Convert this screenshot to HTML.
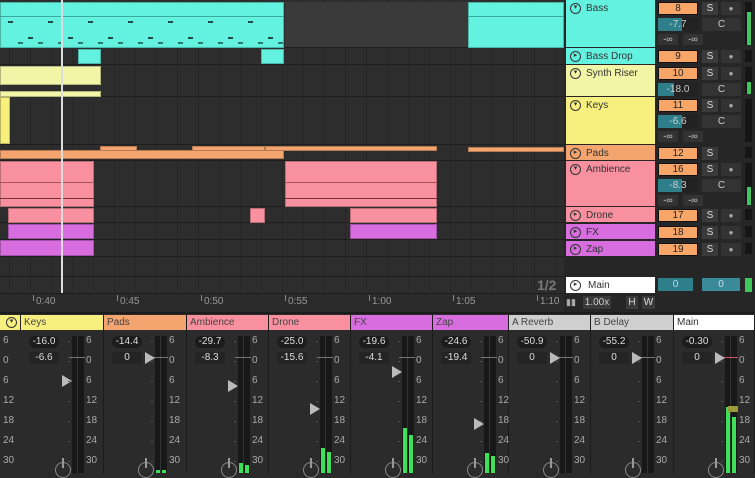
<!DOCTYPE html>
<html><head><meta charset="utf-8"><style>
*{margin:0;padding:0;box-sizing:border-box}
body{width:755px;height:473px;overflow:hidden;background:#2a2a2a;font-family:"Liberation Sans",sans-serif;position:relative;font-size:10px}
.a{position:absolute}
.lbl{font-size:10px;color:#1a1a1a}
.bx{position:absolute;font-size:10px;text-align:center;color:#ddd;line-height:12px}
.ic{position:absolute;width:11px;height:11px;border:1.3px solid #222;border-radius:50%}
</style></head><body>
<!-- arrangement bg -->
<div class="a" style="left:0;top:0;width:564px;height:293px;background:#2d2d2d"></div>
<div id="arr"></div>
<!-- ruler -->
<div class="a" style="left:0;top:293px;width:564px;height:19px;background:#2a2a2a;border-top:1px solid #1e1e1e"></div>
<div id="rul"></div>
<div class="a" style="left:537px;top:277px;font-size:14px;color:#777;font-weight:bold">1/2</div>
<div class="a" style="left:61px;top:0;width:2px;height:293px;background:#ddd"></div>
<!-- right panel -->
<div class="a" style="left:564px;top:0;width:191px;height:312px;background:#262626"></div>
<div id="rp"></div>
<!-- mixer -->
<div class="a" style="left:0;top:312px;width:755px;height:161px;background:#2b2b2b;border-top:2px solid #1c1c1c"></div>
<div id="mx"></div>
<script>
function d(p,s,h){var e=document.createElement('div');e.className='a';e.style.cssText=s;if(h!=null)e.innerHTML=h;document.getElementById(p).appendChild(e);return e}
// track lines
[47,64,96,144,160,206,222,239,256,276].forEach(function(y){d('arr','left:0;top:'+y+'px;width:564px;height:1px;background:#1e1e1e')});
for(var x=9;x<564;x+=21)d('arr','left:'+x+'px;top:0;width:1px;height:293px;background:rgba(0,0,0,.12)');
var C='#63f2df',Y1='#f3f5a6',Y2='#f8f07e',O='#f4a46f',P='#f8909f',V='#d76ddf';
function clip(x,y,w,h,c){d('arr','left:'+x+'px;top:'+y+'px;width:'+w+'px;height:'+h+'px;background:'+c+';border:1px solid rgba(0,0,0,.25)')}
clip(0,2,284,46,C);clip(468,2,96,46,C);
d('arr','left:0;top:16px;width:284px;height:1px;background:#3aa99b');d('arr','left:468px;top:16px;width:96px;height:1px;background:#3aa99b');
d('arr','left:285px;top:2px;width:183px;height:45px;background:#3a3a3a');
for(var i=0;i<14;i++){d('arr','left:'+(8+i*20)+'px;top:'+(i%2?37:21)+'px;width:5px;height:2px;background:#1d4d48');d('arr','left:'+(18+i*20)+'px;top:42px;width:5px;height:2px;background:#2a7a6e')}
clip(78,49,23,15,C);clip(261,49,23,15,C);
clip(0,66,101,19,Y1);clip(0,91,101,6,Y1);
clip(0,97,10,47,Y2);
clip(0,150,284,9,O);clip(100,146,37,5,O);clip(192,146,73,5,O);clip(265,146,172,5,O);clip(468,147,96,5,O);
clip(0,161,94,46,P);clip(285,161,152,46,P);
d('arr','left:0;top:182px;width:94px;height:1px;background:#a55');d('arr','left:285px;top:182px;width:152px;height:1px;background:#a55');
d('arr','left:0;top:198px;width:94px;height:1px;background:#733');d('arr','left:285px;top:198px;width:152px;height:1px;background:#733');
clip(8,208,86,15,P);clip(250,208,15,15,P);clip(350,208,87,15,P);
clip(8,224,86,15,V);clip(350,224,87,15,V);
clip(0,240,94,16,V);
['0:40','0:45','0:50','0:55','1:00','1:05','1:10'].forEach(function(t,i){var x=33+i*84;d('rul','left:'+x+'px;top:295px;width:1px;height:6px;background:#888');d('rul','left:'+(x+3)+'px;top:296px;color:#999;font-size:10px',t)});
// right panel rows
var rows=[['Bass',0,47,C,'8',1,'-7.7',1],['Bass Drop',48,16,C,'9',0],['Synth Riser',65,31,Y1,'10',1,'-18.0',0],['Keys',97,47,Y2,'11',1,'-6.6',1],['Pads',145,15,O,'12',0],['Ambience',161,45,P,'16',1,'-8.3',1],['Drone',207,15,P,'17',0],['FX',224,15,V,'18',0],['Zap',241,15,V,'19',0]];
rows.forEach(function(r,i){
 var y=r[1],h=r[2];
 d('rp','left:566px;top:'+y+'px;width:89px;height:'+h+'px;background:'+r[3]);
 d('rp','left:570px;top:'+(y+3)+'px;width:11px;height:11px;border:1.3px solid #333;border-radius:50%;font-size:7px;line-height:8px;text-align:center;color:#333',r[5]?'▾':'▸');
 d('rp','left:586px;top:'+(y+3)+'px;font-size:10px;color:#333',r[0]);
 d('rp','left:658px;top:'+(y+2)+'px;width:40px;height:13px;background:#f7a668;border:1px solid #111;text-align:center;font-size:10px;line-height:11px;color:#222',r[4]);
 d('rp','left:702px;top:'+(y+2)+'px;width:16px;height:13px;background:#3a3a3a;text-align:center;font-size:10px;line-height:13px;color:#ddd','S');
 if(i!=4)d('rp','left:721px;top:'+(y+2)+'px;width:20px;height:13px;background:#333;text-align:center;font-size:8px;line-height:13px;color:#aaa','●');
 d('rp','left:745px;top:'+(y+2)+'px;width:7px;height:'+(h-4)+'px;background:#151515');
 if(r[6]){d('rp','left:658px;top:'+(y+18)+'px;width:40px;height:13px;background:#222;font-size:10px;line-height:13px;color:#ccc;text-align:center','<div style="position:absolute;left:0;top:0;height:13px;width:'+(r[6]=='-18.0'?16:24)+'px;background:#2f7f8a"></div><span style="position:relative">'+r[6]+'</span>');
  d('rp','left:702px;top:'+(y+18)+'px;width:39px;height:13px;background:#333;text-align:center;font-size:10px;line-height:13px;color:#ccc','C');
  if(r[7]){d('rp','left:658px;top:'+(y+34)+'px;width:20px;height:11px;background:#333;text-align:center;font-size:9px;line-height:11px;color:#ccc','-∞');d('rp','left:683px;top:'+(y+34)+'px;width:20px;height:11px;background:#333;text-align:center;font-size:9px;line-height:11px;color:#ccc','-∞')}}
});
d('rp','left:747px;top:12px;width:4px;height:33px;background:#3cc85a');d('rp','left:747px;top:82px;width:4px;height:12px;background:#3cc85a');d('rp','left:747px;top:187px;width:4px;height:18px;background:#3cc85a');
d('rp','left:566px;top:277px;width:89px;height:16px;background:#fff');
d('rp','left:570px;top:280px;width:11px;height:11px;border:1.3px solid #333;border-radius:50%;font-size:7px;line-height:8px;text-align:center;color:#333','▸');
d('rp','left:588px;top:280px;color:#333;font-size:10px','Main');
d('rp','left:658px;top:278px;width:35px;height:13px;background:#2f7f8a;text-align:center;color:#bde;line-height:13px','0');
d('rp','left:702px;top:278px;width:38px;height:13px;background:#3a8a9a;text-align:center;color:#cde;line-height:13px','0');
d('rp','left:745px;top:278px;width:7px;height:14px;background:#3cc85a');
d('rp','left:566px;top:297px;width:13px;height:11px;color:#aaa;font-size:9px','▮▮');
d('rp','left:583px;top:296px;width:28px;height:13px;background:#3a3a3a;color:#ccc;text-align:center;line-height:13px','1.00x');
d('rp','left:626px;top:296px;width:12px;height:13px;background:#3a3a3a;color:#ddd;text-align:center;line-height:13px','H');
d('rp','left:642px;top:296px;width:13px;height:13px;background:#3a3a3a;color:#ddd;text-align:center;line-height:13px','W');
// mixer
d('mx','left:0;top:315px;width:20px;height:15px;background:'+Y2);
d('mx','left:6px;top:317px;width:11px;height:11px;border:1.3px solid #333;border-radius:50%;font-size:7px;line-height:8px;text-align:center;color:#333','▾');
['6','0','6','12','18','24','30'].forEach(function(t,j){d('mx','left:3px;top:'+(335+j*20)+'px;color:#aaa;font-size:10px',t)});
var S=[['Keys',21,Y2,'-16.0','-6.6',375,0],['Pads',104,O,'-14.4','0',352,3],['Ambience',187,P,'-29.7','-8.3',380,10],['Drone',269,P,'-25.0','-15.6',403,25],['FX',351,V,'-19.6','-4.1',366,45],['Zap',433,V,'-24.6','-19.4',418,20],['A Reverb',509,'#cfcfcf','-50.9','0',352,0],['B Delay',591,'#cfcfcf','-55.2','0',352,0],['Main',674,'#fff','-0.30','0',352,66]];
S.forEach(function(s,i){
 var x=s[1],w=(i<8?S[i+1][1]:755)-x;
 d('mx','left:'+x+'px;top:315px;width:'+(w-1)+'px;height:15px;background:'+s[2]+';color:'+(i==8?'#333':'#444')+';font-size:10px;padding:2px 3px',s[0]);
 d('mx','left:'+(x+w-1)+'px;top:315px;width:1px;height:158px;background:#1c1c1c');
 d('mx','left:'+(x+8)+'px;top:336px;width:30px;height:12px;background:#1c1c1c;border-radius:6px;color:#ddd;text-align:center;font-size:10px;line-height:12px',s[3]);
 d('mx','left:'+(x+8)+'px;top:352px;width:30px;height:12px;background:#242424;color:#ddd;text-align:center;font-size:10px;line-height:12px',s[4]);
 d('mx','left:'+(x+51)+'px;top:336px;width:12px;height:137px;background:#181818');
 d('mx','left:'+(x+56)+'px;top:336px;width:1px;height:137px;background:#333');
 d('mx','left:'+(x+48)+'px;top:357px;width:16px;height:1px;background:'+(i==8?'#c55':'#777'));
 d('mx','left:'+(x+41)+'px;top:'+s[5]+'px;width:0;height:0;border-top:6px solid transparent;border-bottom:6px solid transparent;border-left:10px solid #bbb');
 ['6','0','6','12','18','24','30'].forEach(function(t,j){d('mx','left:'+(x+65)+'px;top:'+(335+j*20)+'px;color:#aaa;font-size:10px',t);d('mx','left:'+(x+47)+'px;top:'+(341+j*20)+'px;width:2px;height:1px;background:#555')});
 if(s[6]){d('mx','left:'+(x+52)+'px;top:'+(473-s[6])+'px;width:4px;height:'+s[6]+'px;background:#3ee05a');d('mx','left:'+(x+58)+'px;top:'+(473-s[6]*0.85)+'px;width:4px;height:'+(s[6]*0.85)+'px;background:#3ee05a')}
 d('mx','left:'+(x+34)+'px;top:462px;width:16px;height:16px;border:1.5px solid #888;border-radius:50%');
 d('mx','left:'+(x+41)+'px;top:458px;width:2px;height:10px;background:#999');
});
d('mx','left:728px;top:406px;width:10px;height:6px;background:#9a9a3a');
</script>
</body></html>
